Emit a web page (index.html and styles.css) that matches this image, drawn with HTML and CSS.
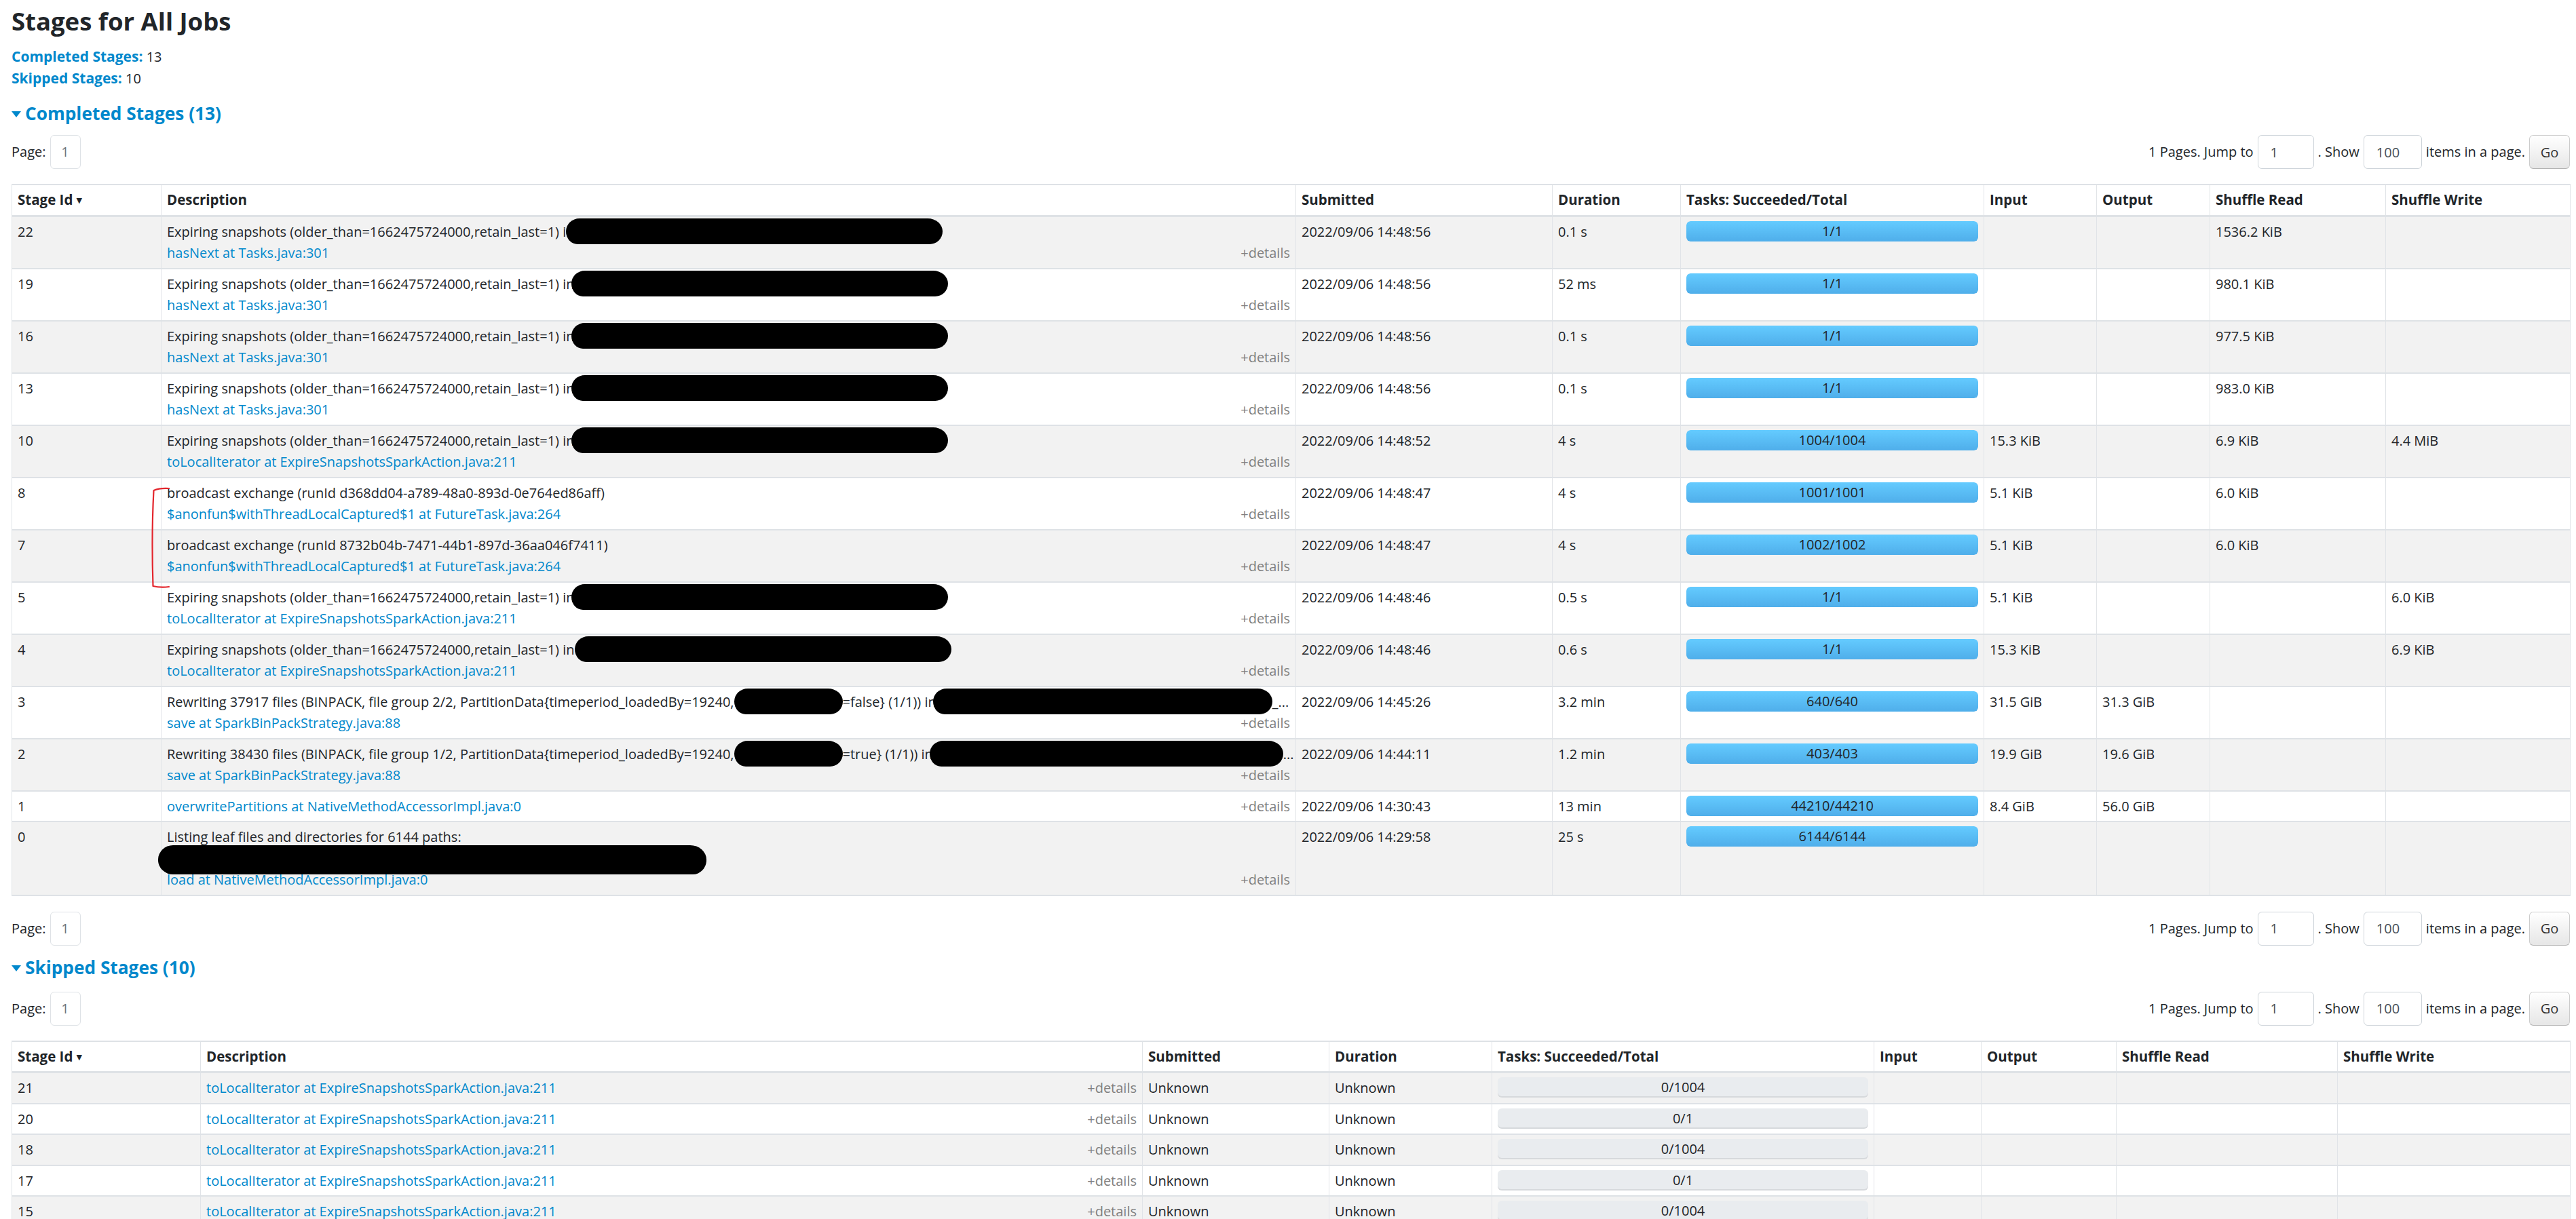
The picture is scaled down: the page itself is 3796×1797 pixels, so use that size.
FILE: index.html
```html
<!DOCTYPE html>
<html lang="en">
<head>
<meta charset="utf-8">
<title>Stages for All Jobs</title>
<link rel="stylesheet" href="styles.css">
</head>
<body>
<div class="page">
  <h3 class="title">Stages for All Jobs</h3>
  <ul class="summary">
    <li><a class="summary-label" href="#completed">Completed Stages:</a> 13</li>
    <li><a class="summary-label" href="#skipped">Skipped Stages:</a> 10</li>
  </ul>

  <h4 class="section-title first" id="completed"><span class="arrow"></span><a href="#">Completed Stages (13)</a></h4>
  <div class="pager pager-top">
    <div class="pager-left"><span>Page:</span><span class="page-num">1</span></div>
    <div class="pager-right"><span>1 Pages. Jump to</span><input class="field field-jump" value="1"><span>. Show</span><input class="field field-size" value="100"><span>items in a page.</span><button class="go">Go</button></div>
  </div>

  <table class="stages completed">
    <colgroup>
      <col class="cc-id"><col class="cc-desc"><col class="cc-sub"><col class="cc-dur"><col class="cc-tasks"><col class="cc-in"><col class="cc-out"><col class="cc-sr"><col class="cc-sw">
    </colgroup>
    <thead>
      <tr><th>Stage Id <span class="sort">&#x25BE;</span></th><th>Description</th><th>Submitted</th><th>Duration</th><th>Tasks: Succeeded/Total</th><th>Input</th><th>Output</th><th>Shuffle Read</th><th>Shuffle Write</th></tr>
    </thead>
    <tbody>
      <tr>
        <td>22</td>
        <td><div class="desc-text">Expiring snapshots (older_than=1662475724000,retain_last=1) i<span class="blob blob-exp"></span></div><div class="name-line"><a class="link" href="#">hasNext at Tasks.java:301</a><span class="details">+details</span></div></td>
        <td>2022/09/06 14:48:56</td><td>0.1 s</td>
        <td><div class="progress"><div class="bar" style="width:100%"></div><span class="progress-label">1/1</span></div></td>
        <td></td><td></td><td>1536.2 KiB</td><td></td>
      </tr>
      <tr>
        <td>19</td>
        <td><div class="desc-text">Expiring snapshots (older_than=1662475724000,retain_last=1) in<span class="blob blob-exp blob-over"></span></div><div class="name-line"><a class="link" href="#">hasNext at Tasks.java:301</a><span class="details">+details</span></div></td>
        <td>2022/09/06 14:48:56</td><td>52 ms</td>
        <td><div class="progress"><div class="bar" style="width:100%"></div><span class="progress-label">1/1</span></div></td>
        <td></td><td></td><td>980.1 KiB</td><td></td>
      </tr>
      <tr>
        <td>16</td>
        <td><div class="desc-text">Expiring snapshots (older_than=1662475724000,retain_last=1) in<span class="blob blob-exp blob-over"></span></div><div class="name-line"><a class="link" href="#">hasNext at Tasks.java:301</a><span class="details">+details</span></div></td>
        <td>2022/09/06 14:48:56</td><td>0.1 s</td>
        <td><div class="progress"><div class="bar" style="width:100%"></div><span class="progress-label">1/1</span></div></td>
        <td></td><td></td><td>977.5 KiB</td><td></td>
      </tr>
      <tr>
        <td>13</td>
        <td><div class="desc-text">Expiring snapshots (older_than=1662475724000,retain_last=1) in<span class="blob blob-exp blob-over"></span></div><div class="name-line"><a class="link" href="#">hasNext at Tasks.java:301</a><span class="details">+details</span></div></td>
        <td>2022/09/06 14:48:56</td><td>0.1 s</td>
        <td><div class="progress"><div class="bar" style="width:100%"></div><span class="progress-label">1/1</span></div></td>
        <td></td><td></td><td>983.0 KiB</td><td></td>
      </tr>
      <tr>
        <td>10</td>
        <td><div class="desc-text">Expiring snapshots (older_than=1662475724000,retain_last=1) in<span class="blob blob-exp blob-over"></span></div><div class="name-line"><a class="link" href="#">toLocalIterator at ExpireSnapshotsSparkAction.java:211</a><span class="details">+details</span></div></td>
        <td>2022/09/06 14:48:52</td><td>4 s</td>
        <td><div class="progress"><div class="bar" style="width:100%"></div><span class="progress-label">1004/1004</span></div></td>
        <td>15.3 KiB</td><td></td><td>6.9 KiB</td><td>4.4 MiB</td>
      </tr>
      <tr>
        <td>8</td>
        <td><div class="desc-text">broadcast exchange (runId d368dd04-a789-48a0-893d-0e764ed86aff)</div><div class="name-line"><a class="link" href="#">$anonfun$withThreadLocalCaptured$1 at FutureTask.java:264</a><span class="details">+details</span></div></td>
        <td>2022/09/06 14:48:47</td><td>4 s</td>
        <td><div class="progress"><div class="bar" style="width:100%"></div><span class="progress-label">1001/1001</span></div></td>
        <td>5.1 KiB</td><td></td><td>6.0 KiB</td><td></td>
      </tr>
      <tr>
        <td>7</td>
        <td><div class="desc-text">broadcast exchange (runId 8732b04b-7471-44b1-897d-36aa046f7411)</div><div class="name-line"><a class="link" href="#">$anonfun$withThreadLocalCaptured$1 at FutureTask.java:264</a><span class="details">+details</span></div></td>
        <td>2022/09/06 14:48:47</td><td>4 s</td>
        <td><div class="progress"><div class="bar" style="width:100%"></div><span class="progress-label">1002/1002</span></div></td>
        <td>5.1 KiB</td><td></td><td>6.0 KiB</td><td></td>
      </tr>
      <tr>
        <td>5</td>
        <td><div class="desc-text">Expiring snapshots (older_than=1662475724000,retain_last=1) in<span class="blob blob-exp blob-over"></span></div><div class="name-line"><a class="link" href="#">toLocalIterator at ExpireSnapshotsSparkAction.java:211</a><span class="details">+details</span></div></td>
        <td>2022/09/06 14:48:46</td><td>0.5 s</td>
        <td><div class="progress"><div class="bar" style="width:100%"></div><span class="progress-label">1/1</span></div></td>
        <td>5.1 KiB</td><td></td><td></td><td>6.0 KiB</td>
      </tr>
      <tr>
        <td>4</td>
        <td><div class="desc-text">Expiring snapshots (older_than=1662475724000,retain_last=1) in<span class="blob blob-exp"></span></div><div class="name-line"><a class="link" href="#">toLocalIterator at ExpireSnapshotsSparkAction.java:211</a><span class="details">+details</span></div></td>
        <td>2022/09/06 14:48:46</td><td>0.6 s</td>
        <td><div class="progress"><div class="bar" style="width:100%"></div><span class="progress-label">1/1</span></div></td>
        <td>15.3 KiB</td><td></td><td></td><td>6.9 KiB</td>
      </tr>
      <tr>
        <td>3</td>
        <td><div class="desc-text">Rewriting 37917 files (BINPACK, file group 2/2, PartitionData{timeperiod_loadedBy=19240,<span class="blob blob-key"></span>=false} (1/1)) in<span class="blob blob-table blob-over"></span>_...</div><div class="name-line"><a class="link" href="#">save at SparkBinPackStrategy.java:88</a><span class="details">+details</span></div></td>
        <td>2022/09/06 14:45:26</td><td>3.2 min</td>
        <td><div class="progress"><div class="bar" style="width:100%"></div><span class="progress-label">640/640</span></div></td>
        <td>31.5 GiB</td><td>31.3 GiB</td><td></td><td></td>
      </tr>
      <tr>
        <td>2</td>
        <td><div class="desc-text">Rewriting 38430 files (BINPACK, file group 1/2, PartitionData{timeperiod_loadedBy=19240,<span class="blob blob-key"></span>=true} (1/1)) in<span class="blob blob-table2 blob-over"></span>...</div><div class="name-line"><a class="link" href="#">save at SparkBinPackStrategy.java:88</a><span class="details">+details</span></div></td>
        <td>2022/09/06 14:44:11</td><td>1.2 min</td>
        <td><div class="progress"><div class="bar" style="width:100%"></div><span class="progress-label">403/403</span></div></td>
        <td>19.9 GiB</td><td>19.6 GiB</td><td></td><td></td>
      </tr>
      <tr>
        <td>1</td>
        <td><div class="name-line"><a class="link" href="#">overwritePartitions at NativeMethodAccessorImpl.java:0</a><span class="details">+details</span></div></td>
        <td>2022/09/06 14:30:43</td><td>13 min</td>
        <td><div class="progress"><div class="bar" style="width:100%"></div><span class="progress-label">44210/44210</span></div></td>
        <td>8.4 GiB</td><td>56.0 GiB</td><td></td><td></td>
      </tr>
      <tr>
        <td>0</td>
        <td><div class="desc-text">Listing leaf files and directories for 6144 paths:</div><div class="desc-text"><span class="blob blob-path"></span></div><div class="name-line"><a class="link" href="#">load at NativeMethodAccessorImpl.java:0</a><span class="details">+details</span></div></td>
        <td>2022/09/06 14:29:58</td><td>25 s</td>
        <td><div class="progress"><div class="bar" style="width:100%"></div><span class="progress-label">6144/6144</span></div></td>
        <td></td><td></td><td></td><td></td>
      </tr>
    </tbody>
  </table>

  <div class="pager pager-bottom">
    <div class="pager-left"><span>Page:</span><span class="page-num">1</span></div>
    <div class="pager-right"><span>1 Pages. Jump to</span><input class="field field-jump" value="1"><span>. Show</span><input class="field field-size" value="100"><span>items in a page.</span><button class="go">Go</button></div>
  </div>

  <h4 class="section-title second" id="skipped"><span class="arrow"></span><a href="#">Skipped Stages (10)</a></h4>
  <div class="pager pager-skipped">
    <div class="pager-left"><span>Page:</span><span class="page-num">1</span></div>
    <div class="pager-right"><span>1 Pages. Jump to</span><input class="field field-jump" value="1"><span>. Show</span><input class="field field-size" value="100"><span>items in a page.</span><button class="go">Go</button></div>
  </div>

  <table class="stages skipped">
    <colgroup>
      <col class="cs-id"><col class="cs-desc"><col class="cs-sub"><col class="cs-dur"><col class="cs-tasks"><col class="cs-in"><col class="cs-out"><col class="cs-sr"><col class="cs-sw">
    </colgroup>
    <thead>
      <tr><th>Stage Id <span class="sort">&#x25BE;</span></th><th>Description</th><th>Submitted</th><th>Duration</th><th>Tasks: Succeeded/Total</th><th>Input</th><th>Output</th><th>Shuffle Read</th><th>Shuffle Write</th></tr>
    </thead>
    <tbody>
      <tr>
        <td>21</td>
        <td><div class="name-line"><a class="link" href="#">toLocalIterator at ExpireSnapshotsSparkAction.java:211</a><span class="details">+details</span></div></td>
        <td>Unknown</td><td>Unknown</td>
        <td><div class="progress progress-empty"><span class="progress-label">0/1004</span></div></td>
        <td></td><td></td><td></td><td></td>
      </tr>
      <tr>
        <td>20</td>
        <td><div class="name-line"><a class="link" href="#">toLocalIterator at ExpireSnapshotsSparkAction.java:211</a><span class="details">+details</span></div></td>
        <td>Unknown</td><td>Unknown</td>
        <td><div class="progress progress-empty"><span class="progress-label">0/1</span></div></td>
        <td></td><td></td><td></td><td></td>
      </tr>
      <tr>
        <td>18</td>
        <td><div class="name-line"><a class="link" href="#">toLocalIterator at ExpireSnapshotsSparkAction.java:211</a><span class="details">+details</span></div></td>
        <td>Unknown</td><td>Unknown</td>
        <td><div class="progress progress-empty"><span class="progress-label">0/1004</span></div></td>
        <td></td><td></td><td></td><td></td>
      </tr>
      <tr>
        <td>17</td>
        <td><div class="name-line"><a class="link" href="#">toLocalIterator at ExpireSnapshotsSparkAction.java:211</a><span class="details">+details</span></div></td>
        <td>Unknown</td><td>Unknown</td>
        <td><div class="progress progress-empty"><span class="progress-label">0/1</span></div></td>
        <td></td><td></td><td></td><td></td>
      </tr>
      <tr>
        <td>15</td>
        <td><div class="name-line"><a class="link" href="#">toLocalIterator at ExpireSnapshotsSparkAction.java:211</a><span class="details">+details</span></div></td>
        <td>Unknown</td><td>Unknown</td>
        <td><div class="progress progress-empty"><span class="progress-label">0/1004</span></div></td>
        <td></td><td></td><td></td><td></td>
      </tr>
    </tbody>
  </table>

  <svg class="bracket" viewBox="0 0 35 155" width="35" height="155" aria-hidden="true">
    <path d="M29 4 C20 3.5 12 4.5 6.5 7 C4.5 45 4 100 5.5 148 C12 149.5 20 150 29 149" fill="none" stroke="#e3262d" stroke-width="2.2" stroke-linecap="round" stroke-linejoin="round"/>
  </svg>
</div>
</body>
</html>
```

FILE: styles.css
```css
* {
  box-sizing: border-box;
}

html,
body {
  margin: 0;
  padding: 0;
  background: #ffffff;
}

body {
  font-family: "Open Sans", "Segoe UI", "Liberation Sans", sans-serif;
  font-size: 20px;
  line-height: 31.5px;
  color: #212529;
}

a {
  color: #0088cc;
  text-decoration: none;
}

.page {
  position: relative;
  width: 3796px;
  padding: 0 9px 0 17px;
}

.title {
  margin: 11px 0 0;
  font-size: 36.5px;
  line-height: 40px;
  font-weight: 700;
  color: #212529;
}

.summary {
  list-style: none;
  margin: 17px 0 0;
  padding: 0;
}

.summary-label {
  font-weight: 700;
  font-size: 21px;
}

.section-title {
  display: flex;
  align-items: center;
  gap: 6px;
  margin: 0;
  font-size: 26.25px;
  line-height: 31.5px;
  font-weight: 700;
}

.section-title.first {
  margin-top: 21px;
}

.section-title.second {
  margin-top: 17px;
}

.arrow {
  width: 0;
  height: 0;
  border-left: 7.5px solid transparent;
  border-right: 7.5px solid transparent;
  border-top: 9px solid #0088cc;
  margin-top: 2px;
}

.pager {
  display: flex;
  justify-content: space-between;
  align-items: center;
  height: 50px;
}

.pager-top {
  margin-top: 15.5px;
}

.pager-bottom {
  margin-top: 23px;
}

.pager-skipped {
  margin-top: 19.5px;
}

.pager-left,
.pager-right {
  display: flex;
  align-items: center;
  gap: 6px;
  height: 50px;
}

.page-num {
  display: flex;
  align-items: center;
  justify-content: center;
  width: 45px;
  height: 50px;
  border: 1px solid #dee2e6;
  border-radius: 6px;
  color: #6c757d;
  background: #ffffff;
}

.field {
  height: 50px;
  padding: 0 0 0 18px;
  border: 1px solid #ced4da;
  border-radius: 6px;
  font-family: "Open Sans", "Segoe UI", "Liberation Sans", sans-serif;
  font-size: 20px;
  color: #495057;
  background: #ffffff;
}

.field-jump {
  width: 83px;
}

.field-size {
  width: 86px;
}

.go {
  width: 60px;
  height: 50px;
  padding: 0;
  border: 1px solid #cccccc;
  border-bottom-color: #b3b3b3;
  border-radius: 6px;
  background: linear-gradient(to bottom, #ffffff, #e6e6e6);
  font-family: "Open Sans", "Segoe UI", "Liberation Sans", sans-serif;
  font-size: 20px;
  color: #333333;
}

/* tables */
.stages {
  width: 3770px;
  margin-top: 22px;
  table-layout: fixed;
  border-collapse: collapse;
  border: 1px solid #dee2e6;
}

.stages th,
.stages td {
  padding: 6px 8px;
  border-left: 1px solid #e1e4e8;
  border-right: 1px solid #e1e4e8;
  border-top: 2px solid #dee2e6;
  vertical-align: top;
  text-align: left;
}

.stages th {
  font-size: 20.5px;
  font-weight: 700;
  border-bottom: 3px solid #dee2e6;
  white-space: nowrap;
}

.stages tbody tr:nth-child(odd) {
  background: #f2f2f2;
}

.stages tbody tr:last-child td {
  border-bottom: 2px solid #dee2e6;
}

.sort {
  font-size: 15px;
  vertical-align: 2px;
}

.cc-id { width: 220px; }
.cc-desc { width: 1672px; }
.cc-sub { width: 378px; }
.cc-dur { width: 189px; }
.cc-tasks { width: 447px; }
.cc-in { width: 166px; }
.cc-out { width: 167px; }
.cc-sr { width: 259px; }
.cc-sw { width: 272px; }

.cs-id { width: 278px; }
.cs-desc { width: 1388px; }
.cs-sub { width: 275px; }
.cs-dur { width: 240px; }
.cs-tasks { width: 563px; }
.cs-in { width: 158px; }
.cs-out { width: 199px; }
.cs-sr { width: 326px; }
.cs-sw { width: 343px; }

.desc-text {
  white-space: nowrap;
}

.name-line {
  display: flex;
  justify-content: space-between;
  align-items: baseline;
  white-space: nowrap;
}

.details {
  font-size: 20px;
  color: #808080;
}

/* redaction marker strokes */
.blob {
  display: inline-block;
  height: 38px;
  margin: -4px 0 -5px 0;
  vertical-align: -6px;
  background: #000000;
  border-radius: 20px 22px 19px 17px / 19px 19px 19px 19px;
}

.blob-over {
  margin-left: -5px;
}

.blob-exp {
  width: 555px;
}

.blob-key {
  width: 160px;
}

.blob-table {
  width: 500px;
}

.blob-table2 {
  width: 521px;
}

.blob-path {
  width: 808px;
  height: 43px;
  margin: -5px 0 -9px -13px;
  vertical-align: -7px;
  border-radius: 22px 24px 20px 22px / 21px 21px 21px 21px;
}

/* progress bars */
.progress {
  display: grid;
  height: 30px;
  border-radius: 6px;
  background: #e9ecef;
  overflow: hidden;
}

.progress-empty {
  box-shadow: inset 0 -2px 0 rgba(0, 0, 0, 0.08);
}

.bar,
.progress-label {
  grid-area: 1 / 1;
}

.bar {
  justify-self: start;
  height: 30px;
  border-radius: 6px;
  background: linear-gradient(to bottom, #64cbff, #4faeea);
}

.progress-label {
  text-align: center;
  line-height: 30px;
  color: #212529;
}

/* hand-drawn annotation over the table */
.bracket {
  position: absolute;
  left: 220px;
  top: 705px;
}
```
